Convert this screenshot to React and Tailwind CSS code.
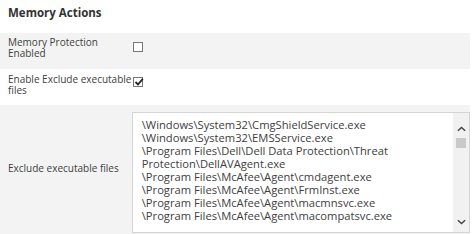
import React from "react";

const items = [
  "\\Windows\\System32\\CmgShieldService.exe",
  "\\Windows\\System32\\EMSService.exe",
  "\\Program Files\\Dell\\Dell Data Protection\\Threat|Protection\\DellAVAgent.exe",
  "\\Program Files\\McAfee\\Agent\\cmdagent.exe",
  "\\Program Files\\McAfee\\Agent\\FrmInst.exe",
  "\\Program Files\\McAfee\\Agent\\macmnsvc.exe",
  "\\Program Files\\McAfee\\Agent\\macompatsvc.exe",
];

function Box({ checked }) {
  return (
    <div className="w-[10px] h-[10px] border border-[#777] bg-white relative">
      {checked && (
        <svg viewBox="0 0 10 10" className="absolute left-[0px] top-[-1px] w-[10px] h-[10px]">
          <path d="M1.5 5 L4 7.5 L8.8 1.8" fill="none" stroke="#222" strokeWidth="1.8" />
        </svg>
      )}
    </div>
  );
}

export default function App() {
  return (
    <div
      className="w-[474px] h-[234px] bg-white overflow-hidden text-[#404040]"
      style={{ fontFamily: '"Open Sans", "Noto Sans", sans-serif' }}
    >
      <div className="h-[33px] pl-[8px] pt-[5px] text-[11.5px] font-bold text-[#333] leading-[16px]">
        Memory Actions
      </div>
      <div className="w-[470px] h-[36px] bg-[#f3f3f3] flex items-start pt-[4px]">
        <div className="w-[132px] pl-[8px] text-[10px] leading-[11px]">
          Memory Protection<br />Enabled
        </div>
        <div className="mt-[5px] pl-[1px]"><Box /></div>
      </div>
      <div className="w-[470px] h-[36px] flex items-start pt-[5px]">
        <div className="w-[132px] pl-[8px] text-[10px] leading-[11px] whitespace-nowrap">
          Enable Exclude executable<br />files
        </div>
        <div className="mt-[3px] pl-[1px]"><Box checked /></div>
      </div>
      <div className="w-[470px] h-[129px] bg-[#f3f3f3] flex pt-[7px]">
        <div className="w-[132px] pl-[8px] text-[10px] flex items-center pb-[9px]">
          Exclude executable files
        </div>
        <div className="w-[339px] h-[121px] border border-[#d4d4d4] bg-white flex">
          <div className="flex-1 pl-[9px] pt-[5px] text-[11.2px] leading-[13px] whitespace-nowrap overflow-hidden">
            {items.map((t, i) => (
              <div key={i}>
                {t.split("|").map((p, j) => (
                  <div key={j}>{p}</div>
                ))}
              </div>
            ))}
          </div>
          <div className="w-[16px] bg-[#f1f1f1] flex flex-col items-center">
            <svg viewBox="0 0 10 6" className="w-[9px] h-[6px] mt-[13px]">
              <path d="M1 5 L5 1.2 L9 5" fill="none" stroke="#444" strokeWidth="1.6" />
            </svg>
            <div className="w-[10px] h-[10px] bg-[#c9c9c9] mt-[6px]" />
            <div className="flex-1" />
            <svg viewBox="0 0 10 6" className="w-[9px] h-[6px] mb-[7px]">
              <path d="M1 1 L5 4.8 L9 1" fill="none" stroke="#444" strokeWidth="1.6" />
            </svg>
          </div>
        </div>
      </div>
    </div>
  );
}
